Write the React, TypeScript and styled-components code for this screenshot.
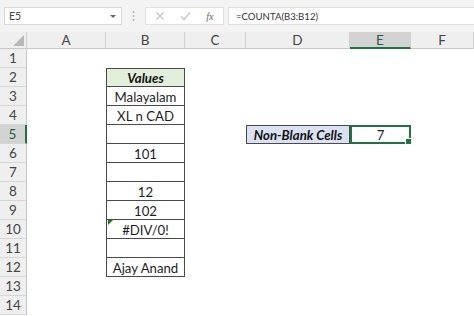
import React from "react";
import styled, { createGlobalStyle, css } from "styled-components";

const GlobalStyle = createGlobalStyle`
  html, body {
    margin: 0;
    padding: 0;
    background: #ffffff;
  }
  body {
    font-family: Lato, "Liberation Sans", Arial, sans-serif;
    overflow: hidden;
  }
`;

const Window = styled.div`
  width: 474px;
  height: 316px;
  overflow: hidden;
  display: flex;
  flex-direction: column;
  background: #ffffff;
`;

const Toolbar = styled.div`
  flex: none;
  height: 32px;
  box-sizing: border-box;
  padding: 7px 0 0 4px;
  display: flex;
  align-items: flex-start;
  background: #f3f3f3;
`;

const NameBox = styled.div`
  width: 118px;
  height: 18px;
  box-sizing: border-box;
  background: #ffffff;
  border: 1px solid #d8d8d8;
  display: flex;
  align-items: center;
  justify-content: space-between;
  padding: 0 5px 0 4px;
  font-size: 10.5px;
  color: #444444;
`;

const DropArrow = styled.span`
  width: 0;
  height: 0;
  border-left: 3px solid transparent;
  border-right: 3px solid transparent;
  border-top: 3px solid #666666;
`;

const Grip = styled.div`
  width: 23px;
  height: 18px;
  display: flex;
  align-items: center;
  justify-content: center;
`;

const ButtonBox = styled.div`
  width: 79px;
  height: 18px;
  box-sizing: border-box;
  background: #ffffff;
  border: 1px solid #e0e0e0;
  display: flex;
  align-items: center;
  justify-content: space-around;
  padding: 0 2px;
`;

const Fx = styled.span`
  font-family: "Liberation Serif", "Times New Roman", serif;
  font-style: italic;
  font-size: 10px;
  color: #666666;
`;

const FormulaInput = styled.div`
  flex: 1;
  margin-left: 4px;
  height: 18px;
  box-sizing: border-box;
  background: #ffffff;
  border: 1px solid #e0e0e0;
  border-right: none;
  display: flex;
  align-items: center;
  padding-left: 7px;
  font-size: 9.6px;
  color: #333333;
`;

const Sheet = styled.div`
  display: grid;
  grid-template-columns: 27px 79px 79px 61px 104px 61px 1fr;
  grid-template-rows: 17px;
  grid-auto-rows: 19px;
`;

const headBase = css`
  box-sizing: border-box;
  background: #efefef;
  display: flex;
  align-items: center;
  justify-content: center;
  font-size: 13.5px;
  color: #444444;
`;

const Corner = styled.div`
  ${headBase};
  border-right: 1px solid #d0d0d0;
  border-bottom: 1px solid #c8c8c8;
  justify-content: flex-end;
  align-items: flex-end;
  padding: 0 2px 2px 0;
`;

const CornerMark = styled.span`
  width: 0;
  height: 0;
  border-left: 11px solid transparent;
  border-bottom: 11px solid #b8b8b8;
`;

const ColHead = styled.div<{ $active?: boolean }>`
  ${headBase};
  border-right: 1px solid #d0d0d0;
  border-bottom: 1px solid #c8c8c8;
  ${(p) =>
    p.$active &&
    css`
      background: #d3d3d3;
      color: #2b5e40;
      border-bottom: 2px solid #217346;
    `}
`;

const RowHead = styled.div<{ $active?: boolean }>`
  ${headBase};
  border-right: 1px solid #c8c8c8;
  border-bottom: 1px solid #d6d6d6;
  ${(p) =>
    p.$active &&
    css`
      background: #d3d3d3;
      color: #2b5e40;
      border-right: 2px solid #217346;
    `}
`;

type CellSpec = {
  text?: string;
  bold?: boolean;
  fill?: string;
  boxed?: boolean;
  top?: boolean;
  flag?: boolean;
  selected?: boolean;
};

const Cell = styled.div<{
  $bold?: boolean;
  $fill?: string;
  $boxed?: boolean;
  $top?: boolean;
  $flag?: boolean;
  $selected?: boolean;
}>`
  position: relative;
  box-sizing: border-box;
  display: flex;
  align-items: center;
  justify-content: center;
  padding-top: 1px;
  font-size: 13.2px;
  color: #1e1e1e;
  white-space: nowrap;
  background: ${(p) => p.$fill || "#ffffff"};
  ${(p) =>
    p.$bold &&
    css`
      font-weight: bold;
      font-style: italic;
      color: #111111;
    `}
  ${(p) =>
    p.$boxed &&
    css`
      border-left: 1px solid #4a4a4a;
      border-right: 1px solid #4a4a4a;
      border-bottom: 1px solid #4a4a4a;
    `}
  ${(p) =>
    p.$top &&
    css`
      border-top: 1px solid #4a4a4a;
    `}
  ${(p) =>
    p.$selected &&
    css`
      border: 2px solid #217346;
    `}
  ${(p) =>
    p.$flag &&
    css`
      &::before {
        content: "";
        position: absolute;
        left: 1px;
        top: 0;
        border-top: 5px solid #1f7a1f;
        border-right: 5px solid transparent;
      }
    `}
`;

const FillHandle = styled.span`
  position: absolute;
  right: -3px;
  bottom: -3px;
  width: 5px;
  height: 5px;
  background: #217346;
  border: 1px solid #ffffff;
`;

const columns = ["A", "B", "C", "D", "E", "F"];

const cells: Record<string, CellSpec> = {
  B2: { text: "Values", bold: true, fill: "#e2efda", boxed: true, top: true },
  B3: { text: "Malayalam", boxed: true },
  B4: { text: "XL n CAD", boxed: true },
  B5: { boxed: true },
  B6: { text: "101", boxed: true },
  B7: { boxed: true },
  B8: { text: "12", boxed: true },
  B9: { text: "102", boxed: true },
  B10: { text: "#DIV/0!", boxed: true, flag: true },
  B11: { boxed: true },
  B12: { text: "Ajay Anand", boxed: true },
  D5: { text: "Non-Blank Cells", bold: true, fill: "#d9e1f2", boxed: true, top: true },
  E5: { text: "7", selected: true },
};

const CancelIcon = () => (
  <svg width="10" height="10" viewBox="0 0 10 10">
    <path d="M1.5 1.5 L8.5 8.5 M8.5 1.5 L1.5 8.5" stroke="#c4c4c4" strokeWidth="1.2" fill="none" />
  </svg>
);

const CheckIcon = () => (
  <svg width="11" height="10" viewBox="0 0 11 10">
    <path d="M1 5.5 L4 8.5 L10 1.5" stroke="#c4c4c4" strokeWidth="1.2" fill="none" />
  </svg>
);

const GripDots = () => (
  <svg width="3" height="12" viewBox="0 0 3 12">
    <circle cx="1.5" cy="2" r="1" fill="#b0b0b0" />
    <circle cx="1.5" cy="6" r="1" fill="#b0b0b0" />
    <circle cx="1.5" cy="10" r="1" fill="#b0b0b0" />
  </svg>
);

const App = () => {
  const rows = Array.from({ length: 14 }, (_, i) => i + 1);
  return (
    <Window>
      <GlobalStyle />
      <Toolbar>
        <NameBox>
          <span>E5</span>
          <DropArrow />
        </NameBox>
        <Grip>
          <GripDots />
        </Grip>
        <ButtonBox>
          <CancelIcon />
          <CheckIcon />
          <Fx>fx</Fx>
        </ButtonBox>
        <FormulaInput>=COUNTA(B3:B12)</FormulaInput>
      </Toolbar>
      <Sheet>
        <Corner>
          <CornerMark />
        </Corner>
        {columns.map((c) => (
          <ColHead key={c} $active={c === "E"}>
            {c}
          </ColHead>
        ))}
        {rows.map((r) => (
          <React.Fragment key={r}>
            <RowHead $active={r === 5}>{r}</RowHead>
            {columns.map((c) => {
              const spec = cells[`${c}${r}`] || {};
              return (
                <Cell
                  key={c}
                  $bold={spec.bold}
                  $fill={spec.fill}
                  $boxed={spec.boxed}
                  $top={spec.top}
                  $flag={spec.flag}
                  $selected={spec.selected}
                >
                  {spec.text}
                  {spec.selected && <FillHandle />}
                </Cell>
              );
            })}
          </React.Fragment>
        ))}
      </Sheet>
    </Window>
  );
};

export default App;
